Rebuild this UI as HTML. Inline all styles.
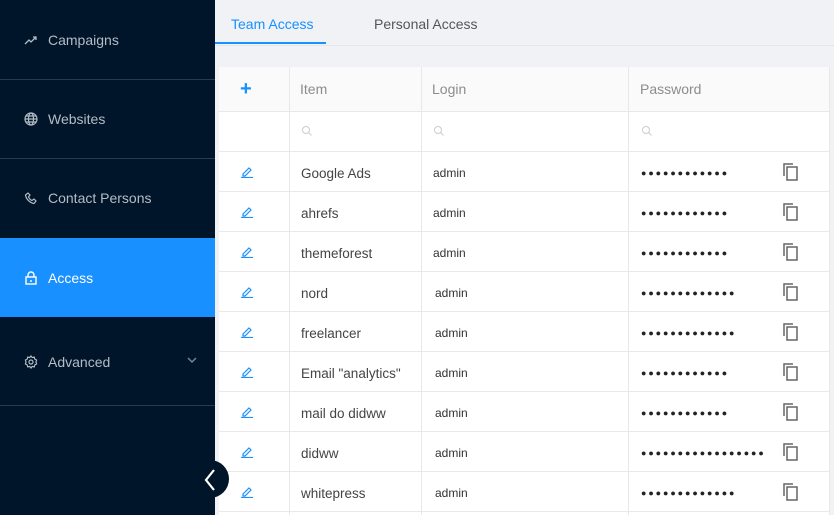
<!DOCTYPE html>
<html><head><meta charset="utf-8"><style>
*{margin:0;padding:0;box-sizing:border-box}
body{width:834px;height:515px;overflow:hidden;font-family:"Liberation Sans",sans-serif;background:#f0f2f5;position:relative}
.sb{position:absolute;left:0;top:0;width:215px;height:515px;background:#001529}
.it{position:absolute;left:0;width:215px;color:#b4bcc6;font-size:14px;display:flex;align-items:center;padding-left:24px}
.it svg{margin-right:10px}
.ln{position:absolute;left:0;width:215px;height:1px;background:#2b3a4b}
.act{background:#1890ff;color:#fff}
.tabs{position:absolute;left:215px;top:0;width:619px;height:46px;border-bottom:1px solid #e3e6ea}
.tab{position:absolute;top:16px;font-size:14px}
.tbl{position:absolute;left:219px;top:67px;width:611px;height:448px;background:#fff}
.c{position:absolute;top:0;bottom:0;width:1px;background:#e8e8e8}
.r{position:absolute;left:0;width:611px;height:1px;background:#e8e8e8}
.t{position:absolute;font-size:13px;color:#333}
.h{position:absolute;font-size:14px;color:#8c8c8c;top:14px}
.pw{position:absolute;font-size:9px;color:#222;letter-spacing:1.9px;margin-top:3px}
</style></head><body>
<div class="sb">
<div class="it" style="top:0;height:79px"><svg width="14" height="14" viewBox="0 0 14 14"><path d="M1 11l4-4 2 2 5-5M9 4h3v3" stroke="#b4bcc6" fill="none" stroke-width="1.3"/></svg>Campaigns</div>
<div class="ln" style="top:79px"></div>
<div class="it" style="top:80px;height:78px"><svg width="14" height="14" viewBox="0 0 14 14" fill="none" stroke="#b4bcc6" stroke-width="1.2"><circle cx="7" cy="7" r="6"/><ellipse cx="7" cy="7" rx="2.5" ry="6"/><path d="M1 7h12M2 4h10M2 10h10"/></svg>Websites</div>
<div class="ln" style="top:158px"></div>
<div class="it" style="top:159px;height:78px"><svg width="14" height="14" viewBox="0 0 14 14"><path d="M4 2l2 2-1.5 2c1 2 2 3 3.5 3.5L10 8l2 2-2 2.5C6 12 2 8 1.5 4z" stroke="#b4bcc6" fill="none" stroke-width="1.2"/></svg>Contact Persons</div>
<div class="it act" style="top:238px;height:79px"><svg width="14" height="14" viewBox="0 0 14 14" fill="none" stroke="#fff" stroke-width="1.4"><rect x="2" y="6" width="10" height="7"/><path d="M4 6V4a3 3 0 016 0v2M7 9v2"/></svg>Access</div>
<div class="it" style="top:318px;height:87px"><svg width="14" height="14" viewBox="0 0 14 14" fill="none" stroke="#b4bcc6" stroke-width="1.2"><circle cx="7" cy="7" r="2"/><path d="M7 1l1.3 1.6 2-.5.5 2L12.6 5l-.6 2 .6 2-1.8.9-.5 2-2-.5L7 13l-1.3-1.6-2 .5-.5-2L1.4 9 2 7l-.6-2 1.8-.9.5-2 2 .5z"/></svg>Advanced<svg style="position:absolute;left:187px;top:39px" width="10" height="7"><path d="M1 1l4 4 4-4" stroke="#7a8592" stroke-width="1.5" fill="none"/></svg></div>
<div class="ln" style="top:405px"></div>
</div>
<div class="tabs">
<div class="tab" style="left:16px;color:#1890ff">Team Access</div>
<div class="tab" style="left:159px;color:#555">Personal Access</div>
<div style="position:absolute;left:0;top:42px;width:111px;height:2px;background:#1890ff"></div>
</div>
<div class="tbl">
<div style="position:absolute;left:0;top:0;width:611px;height:44px;background:#fafafa"></div>
<div class="c" style="left:70px"></div><div class="c" style="left:202px"></div><div class="c" style="left:409px"></div><div class="c" style="left:610px"></div>
<div class="r" style="top:44px"></div><div class="r" style="top:84px"></div>
<div class="r" style="top:124px"></div><div class="r" style="top:164px"></div><div class="r" style="top:204px"></div><div class="r" style="top:244px"></div><div class="r" style="top:284px"></div><div class="r" style="top:324px"></div><div class="r" style="top:364px"></div><div class="r" style="top:404px"></div><div class="r" style="top:444px"></div>
<div style="position:absolute;left:21px;top:11px;font-size:20px;color:#1890ff;font-weight:bold">+</div>
<div class="h" style="left:81px">Item</div><div class="h" style="left:213px">Login</div><div class="h" style="left:421px">Password</div>
<svg style="position:absolute;left:82px;top:58px" width="12" height="12" fill="none" stroke="#ccc"><circle cx="5" cy="5" r="3.5"/><path d="M7.5 7.5l3 3"/></svg>
<svg style="position:absolute;left:214px;top:58px" width="12" height="12" fill="none" stroke="#ccc"><circle cx="5" cy="5" r="3.5"/><path d="M7.5 7.5l3 3"/></svg>
<svg style="position:absolute;left:422px;top:58px" width="12" height="12" fill="none" stroke="#ccc"><circle cx="5" cy="5" r="3.5"/><path d="M7.5 7.5l3 3"/></svg>
<div id="rows"></div>
</div>
<div style="position:absolute;left:191px;top:460px;width:38px;height:38px;border-radius:50%;background:#001529;z-index:5"></div>
<svg style="position:absolute;left:202px;top:468px;z-index:6" width="16" height="24"><path d="M12 2L4 12l8 10" stroke="#fff" stroke-width="2.2" fill="none"/></svg>
<script>
var d=[["Google Ads",12],["ahrefs",12],["themeforest",12],["nord",13],["freelancer",13],["Email \"analytics\"",12],["mail do didww",12],["didww",17],["whitepress",13]];
var h="";
d.forEach(function(x,i){var y=84+i*40;
h+='<svg style="position:absolute;left:21px;top:'+(y+14)+'px" width="14" height="13" fill="none" stroke="#1890ff" stroke-width="1.2"><path d="M3 9l6-6 2 2-6 6H3z"/><path d="M1 12.5h12"/></svg>';
h+='<div class="t" style="left:82px;top:'+(y+15)+'px;font-size:13.5px;color:#444">'+x[0].replace(/"/g,'&quot;')+'</div>';
h+='<div class="t" style="left:'+(i>2?216:214)+'px;top:'+(y+15)+'px;font-size:12px">admin</div>';
h+='<div class="pw" style="left:422px;top:'+(y+14)+'px">'+"&#9679;".repeat(x[1])+'</div>';
h+='<svg style="position:absolute;left:562px;top:'+(y+10)+'px" width="20" height="22" fill="none" stroke="#666" stroke-width="1.5"><path d="M3 15V3h9"/><rect x="6" y="6" width="10" height="13"/></svg>';
});
document.getElementById("rows").innerHTML=h;
</script>
</body></html>
